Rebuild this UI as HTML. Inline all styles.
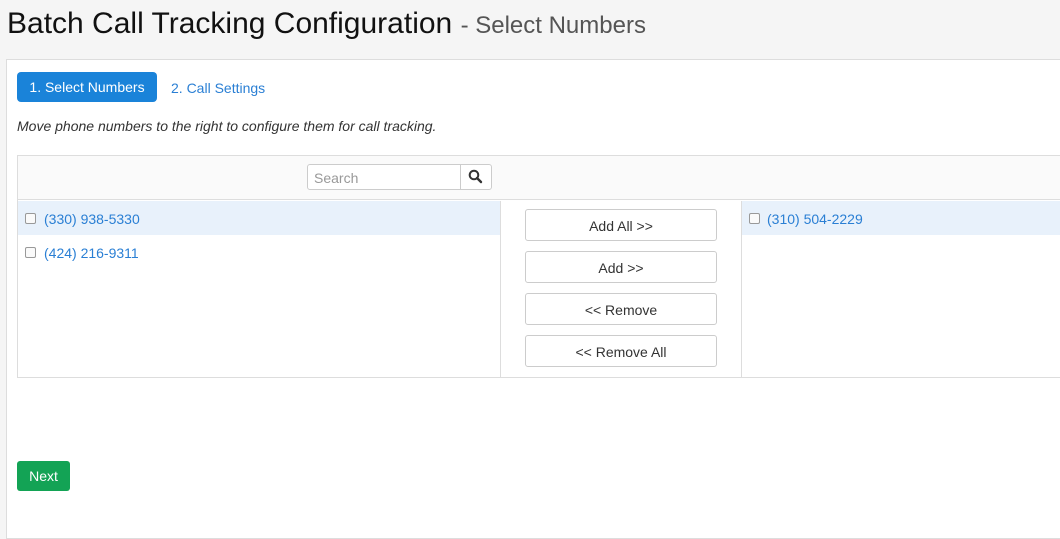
<!DOCTYPE html>
<html><head><style>
*{box-sizing:border-box}
body{margin:0;width:1060px;height:526px;background:#f5f5f5;font-family:"Liberation Sans",sans-serif;overflow:hidden;position:relative}
.a{position:absolute}
h1{position:absolute;left:7px;top:7px;margin:0;font-weight:normal;font-size:30px;color:#111;white-space:nowrap}
h1 small{font-size:24px;color:#555}
.panel{left:6px;top:59px;width:1060px;height:480px;background:#fff;border:1px solid #ddd}
.tab{left:17px;top:72px;width:140px;height:30px;background:#1a83d9;color:#fff;border-radius:4px;font-size:14px;line-height:31px;text-align:center}
.link{color:#2a7fd4;font-size:14px}
.btn{left:525px;width:192px;height:32px;border:1px solid #ccc;border-radius:3px;background:#fff;font-size:14px;color:#333;text-align:center;line-height:32px}
.cb{width:11px;height:11px;border:1px solid #999;border-radius:2px;background:#fafafa}
</style></head><body>
<h1>Batch Call Tracking Configuration <small>- Select Numbers</small></h1>
<div class="a panel"></div>
<div class="a tab">1. Select Numbers</div>
<div class="a link" style="left:171px;top:80px">2. Call Settings</div>
<div class="a" style="left:17px;top:118px;font-size:14px;font-style:italic;color:#333">Move phone numbers to the right to configure them for call tracking.</div>
<div class="a" style="left:17px;top:155px;width:1050px;height:223px;border:1px solid #ddd"></div>
<div class="a" style="left:18px;top:156px;width:1045px;height:44px;background:#fafafa;border-bottom:1px solid #ddd"></div>
<div class="a" style="left:307px;top:164px;width:185px;height:26px;border:1px solid #ccc;border-radius:3px;background:#fff"></div>
<div class="a" style="left:460px;top:164px;width:1px;height:26px;background:#ccc"></div>
<div class="a" style="left:314px;top:170px;font-size:14px;color:#999">Search</div>
<svg class="a" style="left:468px;top:169px" width="15" height="15" viewBox="0 0 15 15"><circle cx="6" cy="6" r="4.3" fill="none" stroke="#333" stroke-width="2"/><path d="M9 9 L13 13" stroke="#333" stroke-width="2.4" stroke-linecap="round"/></svg>
<div class="a" style="left:500px;top:201px;width:1px;height:177px;background:#ddd"></div>
<div class="a" style="left:741px;top:201px;width:1px;height:177px;background:#ddd"></div>
<div class="a" style="left:18px;top:201px;width:482px;height:34px;background:#e8f1fb"></div>
<div class="a" style="left:742px;top:201px;width:320px;height:34px;background:#e8f1fb"></div>
<div class="a cb" style="left:25px;top:213px"></div><div class="a link" style="left:44px;top:211px">(330) 938-5330</div>
<div class="a cb" style="left:25px;top:247px"></div><div class="a link" style="left:44px;top:245px">(424) 216-9311</div>
<div class="a cb" style="left:749px;top:213px"></div><div class="a link" style="left:767px;top:211px">(310) 504-2229</div>
<div class="a btn" style="top:209px">Add All &gt;&gt;</div>
<div class="a btn" style="top:251px">Add &gt;&gt;</div>
<div class="a btn" style="top:293px">&lt;&lt; Remove</div>
<div class="a btn" style="top:335px">&lt;&lt; Remove All</div>
<div class="a" style="left:17px;top:461px;width:53px;height:30px;background:#13a355;border-radius:3px;color:#fff;font-size:14px;line-height:31px;text-align:center">Next</div>
</body></html>
